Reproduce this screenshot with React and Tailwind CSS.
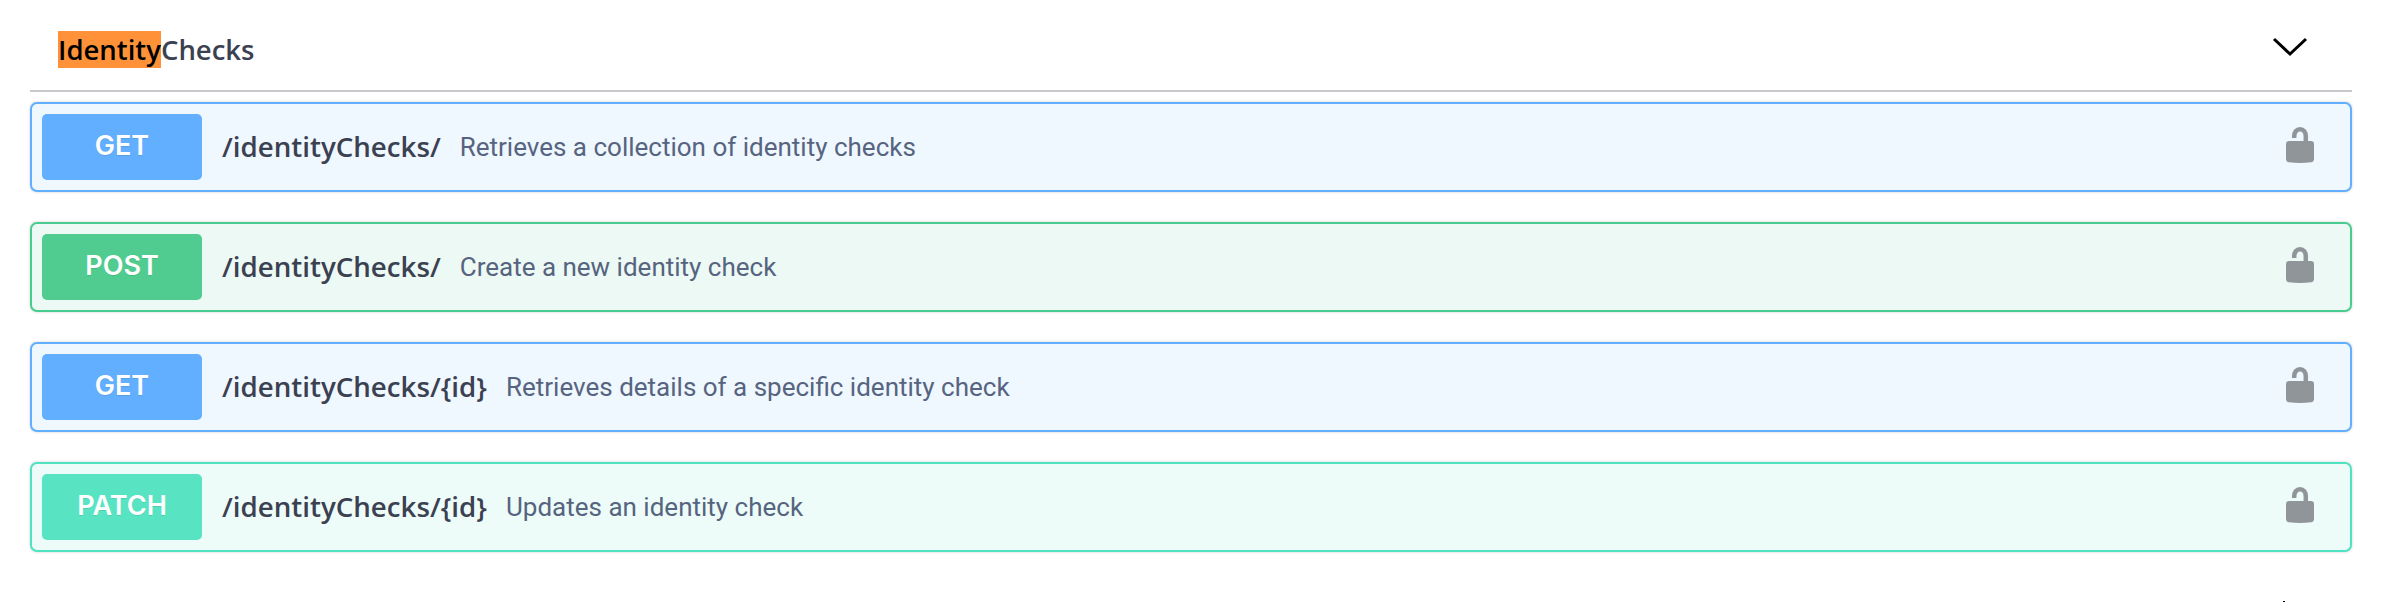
import React from 'react';

const rows = [
  { method: 'GET', path: '/identityChecks/', desc: 'Retrieves a collection of identity checks', box: 'border-[#61affe] bg-[#eff7ff]', badge: 'bg-[#61affe]' },
  { method: 'POST', path: '/identityChecks/', desc: 'Create a new identity check', box: 'border-[#49cc90] bg-[#ecf9f4]', badge: 'bg-[#50cc91]' },
  { method: 'GET', path: '/identityChecks/{id}', desc: 'Retrieves details of a specific identity check', box: 'border-[#61affe] bg-[#eff7ff]', badge: 'bg-[#61affe]' },
  { method: 'PATCH', path: '/identityChecks/{id}', desc: 'Updates an identity check', box: 'border-[#50e3c2] bg-[#edfcf9]', badge: 'bg-[#58e4c3]' },
];

// open padlock, the left leg of the shackle stops short of the body
function Lock() {
  return (
    <svg width="28" height="36" viewBox="0 0 28 36" className="shrink-0 -mt-[4px]" fill="none">
      <path d="M8.200 11V9.500C8.200 5 10.500 2.300 14 2.300S19.800 5 19.800 9.500V16" stroke="#90959a" strokeWidth="4.500" />
      <path d="M0 17Q0 14 3 14H25Q28 14 28 17V32Q28 35 25 35.300Q14 36.500 3 35.300Q0 35 0 32Z" fill="#90959a" />
    </svg>
  );
}

function Row({ row }) {
  return (
    <div className={`flex items-center h-[90px] border-2 rounded-[7px] pl-[10px] pr-[36px] shadow-[0_0_3px_rgba(0,0,0,0.19)] ${row.box}`}>
      <div className={`flex items-center justify-center w-[160px] h-[66px] pb-[2px] rounded-[5px] text-white text-[27px] font-semibold font-['Inter',sans-serif] [text-shadow:0_1px_0_rgba(0,0,0,0.1)] ${row.badge}`}>
        {row.method}
      </div>
      <span className="ml-[20px] text-[27.700px] font-semibold text-[#3b4151] font-['Open_Sans',sans-serif]">{row.path}</span>
      <span className="ml-[19px] text-[26px] text-[#56647f] font-['Roboto',sans-serif]">{row.desc}</span>
      <div className="flex-1" />
      <Lock />
    </div>
  );
}

export default function App() {
  return (
    <div className="relative w-[2408px] h-[602px] bg-white overflow-hidden pl-[30px] pr-[56px]">
      <div className="flex items-center justify-between h-[92px] border-b-2 border-[#c8c9cc] pl-[28px] pr-[44px]">
        <h2 className="mt-[10px] text-[27.500px] font-semibold text-[#3b4151] font-['Open_Sans',sans-serif]">
          <span className="bg-[#ff9238] text-black">Identity</span>Checks
        </h2>
        <svg width="36" height="22" viewBox="0 0 36 22" fill="none" className="mt-[4px]">
          <path d="M2 3L18 18L34 3" stroke="#000" strokeWidth="3" />
        </svg>
      </div>
      <div className="flex flex-col gap-[30px] mt-[10px]">
        {rows.map((row, i) => <Row key={i} row={row} />)}
      </div>
      {/* tip of the next section's chevron, cut off by the bottom edge */}
      <div className="absolute left-[2283px] bottom-0 w-[2px] h-[1px] bg-black" />
    </div>
  );
}
